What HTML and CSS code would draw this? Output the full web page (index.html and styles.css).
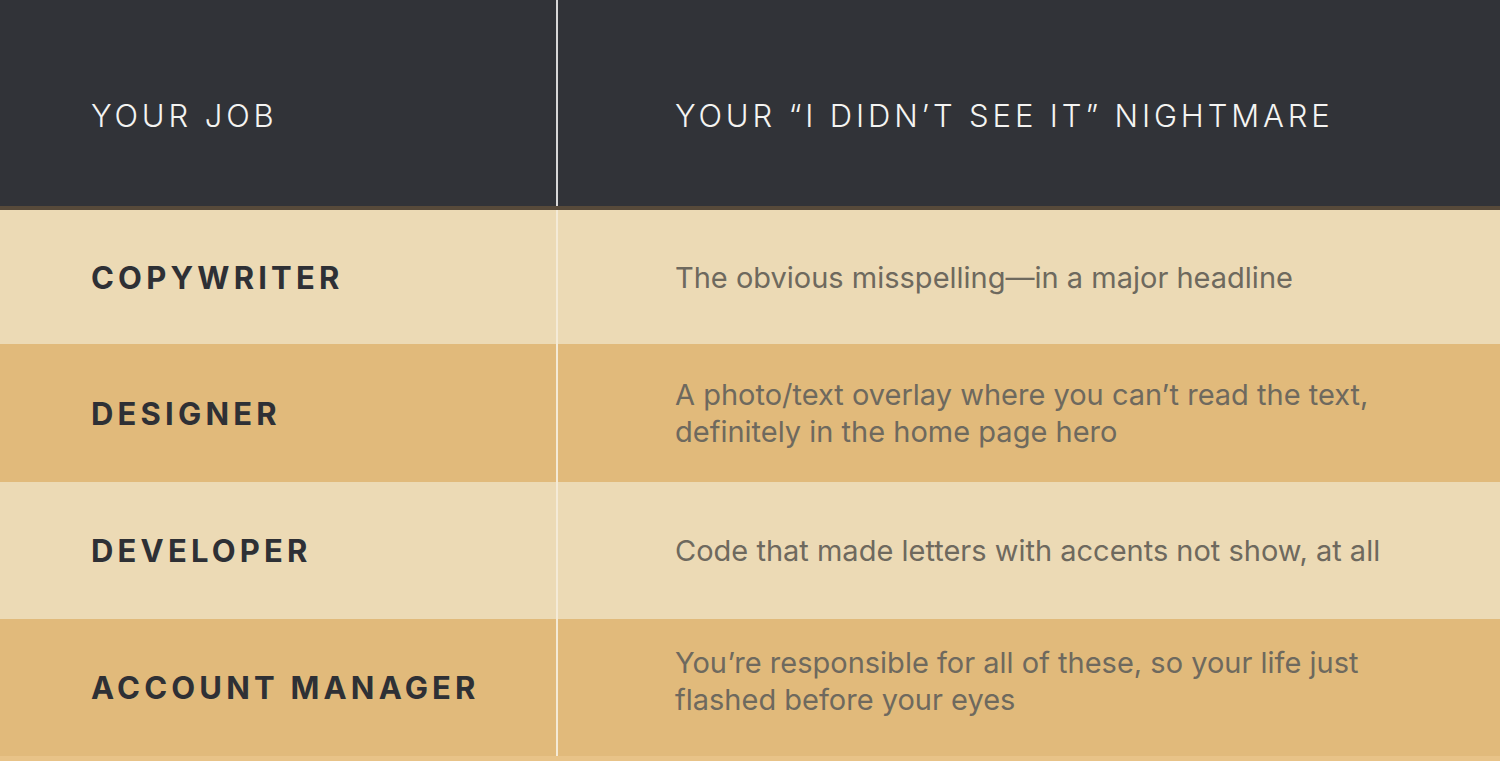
FILE: index.html
```html
<!DOCTYPE html>
<html>
<head>
<meta charset="utf-8">
<link rel="stylesheet" href="styles.css">
</head>
<body>
<div class="table">
  <div class="row head">
    <div class="cell job">YOUR JOB</div>
    <div class="cell desc">YOUR “I DIDN’T SEE IT” NIGHTMARE</div>
  </div>
  <div class="row light r1">
    <div class="cell job">COPYWRITER</div>
    <div class="cell desc">The obvious misspelling—in a major headline</div>
  </div>
  <div class="row dark r2">
    <div class="cell job">DESIGNER</div>
    <div class="cell desc">A photo/text overlay where you can’t read the text,<br>definitely in the home page hero</div>
  </div>
  <div class="row light r3">
    <div class="cell job">DEVELOPER</div>
    <div class="cell desc">Code that made letters with accents not show, at all</div>
  </div>
  <div class="row dark r4">
    <div class="cell job">ACCOUNT MANAGER</div>
    <div class="cell desc">You’re responsible for all of these, so your life just<br>flashed before your eyes</div>
  </div>
</div>
</body>
</html>
```
FILE: styles.css
```css
html, body {
  margin: 0;
  padding: 0;
}
body {
  width: 1500px;
  height: 761px;
  background: #e8c388;
  font-family: Inter, "DejaVu Sans", sans-serif;
  overflow: hidden;
}
.table {
  display: flex;
  flex-direction: column;
}
.row {
  display: grid;
  grid-template-columns: 556px 1fr;
}
.cell {
  display: flex;
  align-items: center;
}
.cell.job {
  padding-left: 91px;
}
.cell.desc {
  padding-left: 117px;
  border-left: 2px solid #f4ead6;
}
.head {
  height: 206px;
  background: #313338;
  border-bottom: 4px solid #574a3a;
}
.head .cell {
  padding-top: 24px;
  font-size: 31px;
  font-weight: 300;
  letter-spacing: 0.125em;
  color: #f4f4f2;
}
.head .cell.desc {
  border-left-color: #d8d8d8;
}
.light { background: #ecdab5; }
.dark { background: #e1ba7b; }
.r1 { height: 134px; }
.r2 { height: 138px; }
.r3 { height: 137px; }
.r4 { height: 137px; }
.r4 .cell.desc { padding-bottom: 14px; }
.row:not(.head) .cell.job {
  font-size: 31px;
  font-weight: 700;
  letter-spacing: 0.135em;
  color: #2e3035;
}
.row:not(.head) .cell.desc {
  font-size: 29px;
  line-height: 37px;
  color: #6e695e;
}
```
